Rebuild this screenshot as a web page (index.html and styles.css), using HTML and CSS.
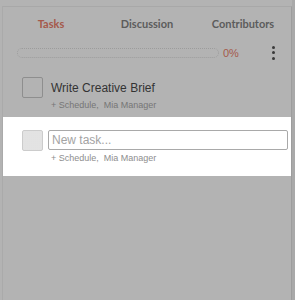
FILE: index.html
```html
<!DOCTYPE html>
<html>
<head>
<meta charset="utf-8">
<link rel="stylesheet" href="styles.css">
</head>
<body>
<div class="app">
  <div class="panel">
    <nav class="tabs">
      <span class="tab active">Tasks</span>
      <span class="tab">Discussion</span>
      <span class="tab">Contributors</span>
    </nav>
    <div class="progress-row">
      <div class="bar"></div>
      <span class="pct">0%</span>
      <span class="kebab"><i></i><i></i><i></i></span>
    </div>
    <div class="task">
      <span class="check"></span>
      <div class="body">
        <div class="title">Write Creative Brief</div>
        <div class="meta">+ Schedule,&nbsp; Mia Manager</div>
      </div>
    </div>
    <div class="task new">
      <span class="check dotted"></span>
      <div class="body">
        <input class="new-input" type="text" placeholder="New task...">
        <div class="meta">+ Schedule,&nbsp; Mia Manager</div>
      </div>
    </div>
  </div>
  <div class="edge"></div>
</div>
</body>
</html>
```
FILE: styles.css
```css
html, body {
  margin: 0;
  padding: 0;
}
body {
  background: #b3b3b3;
  font-family: "Liberation Sans", Arial, sans-serif;
}
.app {
  display: flex;
  height: 300px;
  overflow: hidden;
}
.panel {
  margin-left: 2px;
  margin-top: 6px;
  width: 288px;
  border-left: 1px solid #aaaaaa;
  border-right: 1px solid #9d9d9d;
  border-top: 1px solid #a8a8a8;
  display: flex;
  flex-direction: column;
}
.edge {
  flex: 1;
  background: #a9a9a9;
}
.tabs {
  display: grid;
  grid-template-columns: 1fr 1fr 1fr;
  height: 32px;
  align-items: center;
  text-align: center;
  font-family: Lato, "Open Sans", sans-serif;
  font-weight: 700;
  font-size: 11px;
  color: #5c5c5c;
}
.tab.active {
  color: #a5594b;
}
.progress-row {
  display: flex;
  align-items: center;
  height: 27px;
  padding-left: 14px;
}
.bar {
  width: 200px;
  height: 8px;
  border: 1px dotted #9c9c9c;
  border-radius: 5px;
}
.pct {
  margin-left: 4px;
  font-size: 11px;
  color: #a5594b;
}
.kebab {
  margin-left: 33px;
  display: flex;
  flex-direction: column;
  gap: 2.5px;
}
.kebab i {
  display: block;
  width: 3px;
  height: 3px;
  border-radius: 50%;
  background: #3a3a3a;
}
.task {
  display: flex;
  align-items: flex-start;
  padding: 11px 0 6px 19px;
}
.check {
  flex: none;
  width: 19px;
  height: 19px;
  border: 1px solid #8e8e8e;
  border-radius: 2px;
}
.body {
  margin-left: 8px;
  padding-top: 3px;
  flex: 1;
}
.title {
  font-size: 12px;
  line-height: 16px;
  color: #333;
}
.meta {
  margin-top: 3px;
  font-size: 9px;
  line-height: 12px;
  color: #767676;
}
.task.new {
  background: #fff;
  padding-top: 13px;
  padding-bottom: 12px;
}
.check.dotted {
  border-color: #cccccc;
  background-color: #f7f7f7;
  background-image: radial-gradient(#e2e2e2 0.7px, transparent 0.8px);
  background-size: 2px 2px;
}
.task.new .body {
  margin-left: 5px;
  padding-top: 0;
  padding-right: 3px;
}
.new-input {
  display: block;
  box-sizing: border-box;
  width: 100%;
  height: 20px;
  margin: 0;
  border: 1px solid #a9a9a9;
  border-radius: 2px;
  padding: 0 3px;
  font-family: "Liberation Sans", Arial, sans-serif;
  font-size: 12px;
  color: #333;
  outline: none;
}
.new-input::placeholder {
  color: #a3a3a3;
}
.task.new .meta {
  margin-top: 2px;
  padding-left: 3px;
  color: #8e8e8e;
}
```
